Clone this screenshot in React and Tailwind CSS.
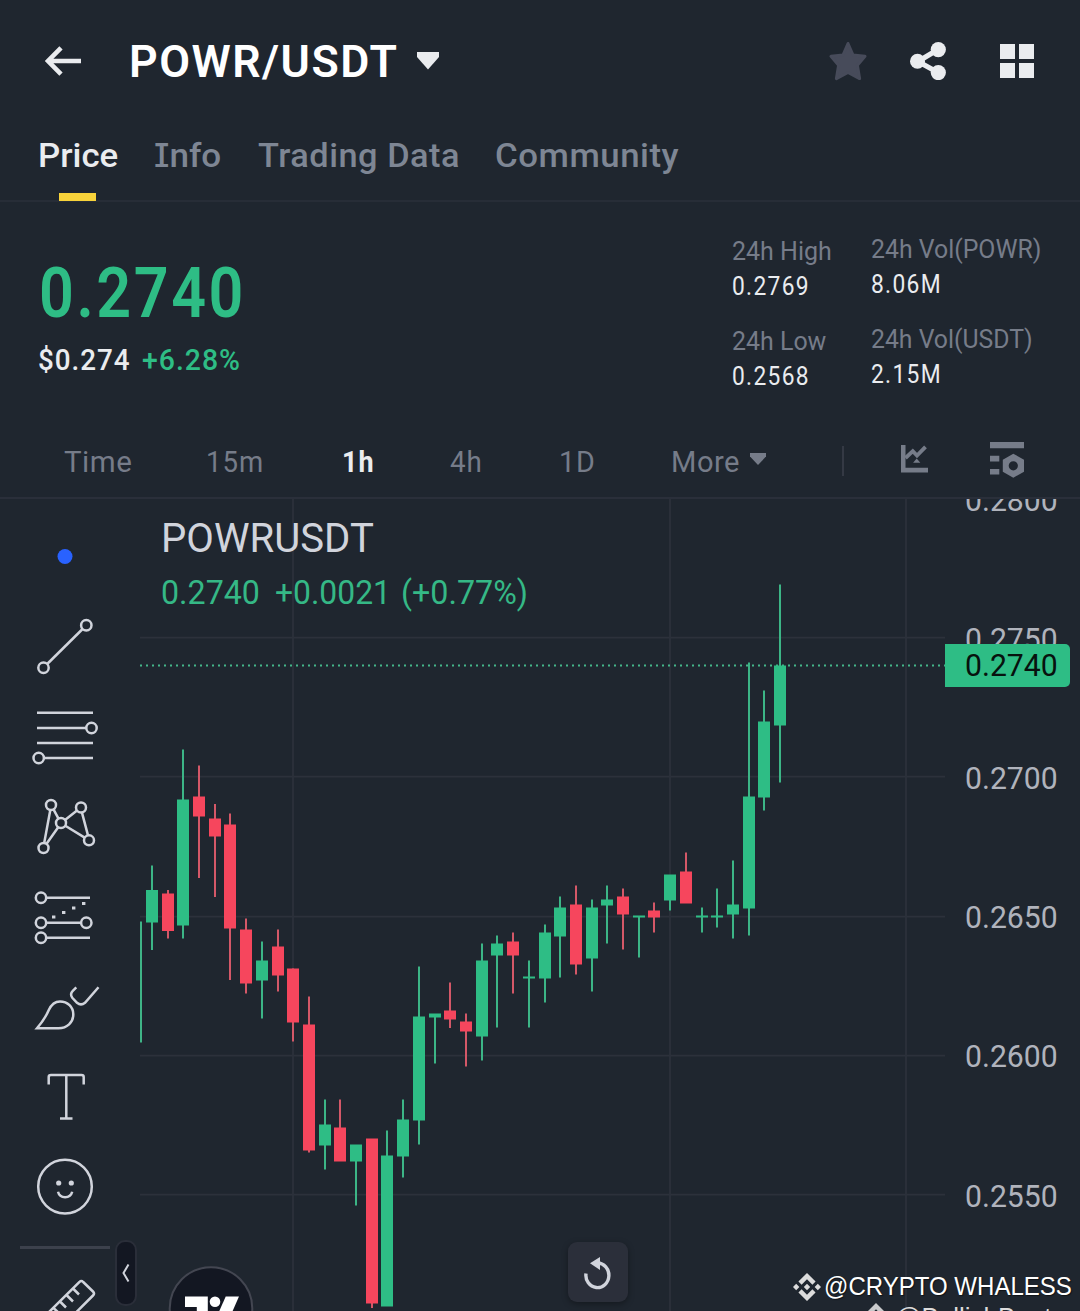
import React, { useLayoutEffect, useRef, useState } from "react";

/* Text stretched horizontally so that it fills exactly `w` pixels. */
function Fit({ w, className = "", children }) {
  const ref = useRef(null);
  const [scale, setScale] = useState(1);
  useLayoutEffect(() => {
    const natural = ref.current.offsetWidth;
    if (natural) setScale(w / natural);
  }, [w]);
  return (
    <span className={"block shrink-0 whitespace-nowrap " + className} style={{ width: w }}>
      <span ref={ref} className="inline-block origin-left" style={{ transform: `scaleX(${scale})` }}>
        {children}
      </span>
    </span>
  );
}

const UP = "#2ebd85";
const DOWN = "#f6465d";

/* x, high, low, body top, body bottom, rising */
const candles = [
  [152, 865.5, 950, 890, 922.5, 1],
  [168, 890, 938.5, 893.5, 931, 0],
  [183, 749.5, 938.5, 799.5, 925.5, 1],
  [199, 765.5, 878, 796.5, 816.5, 0],
  [215, 804, 897, 818.5, 836.5, 0],
  [230, 813.5, 980, 824.5, 928.5, 0],
  [246, 918.5, 993.5, 929.5, 983.5, 0],
  [262, 941.5, 1018.5, 960.5, 980.5, 1],
  [278, 929.5, 991.5, 946.5, 975.5, 0],
  [293, 968.5, 1041.5, 968.5, 1022.5, 0],
  [309, 996.5, 1152.5, 1024.5, 1150.5, 0],
  [325, 1099.5, 1169.5, 1124.5, 1145.5, 1],
  [340, 1099.5, 1161, 1127.5, 1161.5, 0],
  [356, 1145, 1205.5, 1144.5, 1161.5, 1],
  [372, 1139, 1308, 1138.5, 1303.5, 0],
  [387, 1130.5, 1306, 1155.5, 1306.5, 1],
  [403, 1099.5, 1177.5, 1119.5, 1156.5, 1],
  [419, 966.5, 1144.5, 1016.5, 1120.5, 1],
  [435, 1014, 1063.5, 1013.5, 1017.5, 1],
  [450, 982.5, 1028, 1010.5, 1019.5, 0],
  [466, 1013.5, 1066.5, 1021.5, 1031.5, 0],
  [482, 943.5, 1060.5, 960.5, 1036.5, 1],
  [497, 935.5, 1027.5, 943.5, 955.5, 1],
  [513, 932.5, 993.5, 941.5, 955.5, 0],
  [529, 960.5, 1027.5, 976.5, 978.5, 1],
  [545, 924.5, 1002.5, 932.5, 978.5, 1],
  [560, 896.5, 977.5, 907.5, 936.5, 1],
  [576, 885.5, 974.5, 904.5, 964.5, 0],
  [592, 899.5, 991.5, 907.5, 958.5, 1],
  [607, 885.5, 943.5, 899.5, 905.5, 1],
  [623, 888.5, 949.5, 896.5, 914.5, 0],
  [639, 916, 957.5, 915.5, 917.5, 1],
  [654, 902.5, 932.5, 910.5, 917.5, 0],
  [670, 875, 910.5, 874.5, 900.5, 1],
  [686, 852.5, 903, 871.5, 903.5, 0],
  [702, 907.5, 932.5, 915.5, 917.5, 1],
  [717, 888.5, 927.5, 915.5, 917.5, 1],
  [733, 860.5, 938.5, 904.5, 914.5, 1],
  [749, 662.5, 935.5, 796.5, 908.5, 1],
  [764, 690.5, 810.5, 721.5, 797.5, 1],
  [780, 584.5, 782.5, 665.5, 725.5, 1],
];

function Candles() {
  return (
    <svg viewBox="140 499 805 812" className="block h-[812px] w-[805px]">
      <g fill="#2c313b">
        {[637, 776, 916, 1055, 1194].map((y) => (
          <rect key={y} x="140" y={y - 0.3} width="805" height="1.8" />
        ))}
        {[293, 670, 906].map((x) => (
          <rect key={x} x={x - 0.9} y="499" width="1.8" height="812" />
        ))}
      </g>
      <line x1="140" x2="945" y1="665.5" y2="665.5" stroke="#45b58a" strokeWidth="2" strokeDasharray="2 4" />
      <rect x="140" y="921.5" width="2" height="121" fill="#3fb487" />
      {candles.map(([x, high, low, top, bottom, rising]) => (
        <g key={x}>
          <rect x={x - 1} y={high} width="2" height={low - high} fill={rising ? "#3cb586" : "#d45868"} />
          <rect x={x - 6} y={top} width="12" height={bottom - top} fill={rising ? UP : DOWN} />
        </g>
      ))}
    </svg>
  );
}

function Tool({ children }) {
  return (
    <svg
      viewBox="0 0 140 90"
      className="block h-[90px] w-[140px] shrink-0"
      fill="none"
      stroke="#d1d4dc"
      strokeWidth="2.5"
    >
      {children}
    </svg>
  );
}

function Toolbar() {
  return (
    <div className="flex w-[140px] flex-col pt-3">
      <Tool>
        <circle cx="65" cy="45.5" r="7.5" fill="#2962ff" stroke="none" />
      </Tool>
      <Tool>
        <circle cx="43.5" cy="66.7" r="5.2" />
        <circle cx="86.3" cy="24.3" r="5.2" />
        <path d="M47.2 63 82.6 28" />
      </Tool>
      <Tool>
        <path d="M37 21.7H93M37 37H86M37 52H93M44 67H93" />
        <circle cx="91.5" cy="37" r="5.2" />
        <circle cx="38.7" cy="67" r="5.2" />
      </Tool>
      <Tool>
        <circle cx="51" cy="24" r="5" />
        <circle cx="81" cy="26.5" r="5" />
        <circle cx="61" cy="42" r="5" />
        <circle cx="89" cy="59.3" r="5" />
        <circle cx="43.5" cy="67" r="5" />
        <path d="M50.3 29 44.2 62M53.5 28.4 58.5 37.6M58.2 46.2 46.4 63M65 39 77 29.6M81.9 31.4 88 54.4M65.3 44.7 84.7 56.6" />
      </Tool>
      <Tool>
        <circle cx="41" cy="26.7" r="5.2" />
        <circle cx="41" cy="51.7" r="5.2" />
        <circle cx="86.3" cy="51.7" r="5.2" />
        <circle cx="41" cy="66.7" r="5.2" />
        <path d="M46 26.7H90M46 51.7H81M46 66.7H90" />
        <g fill="#d1d4dc" stroke="none">
          <rect x="52" y="44.5" width="3.4" height="3" />
          <rect x="62" y="40" width="3.4" height="3" />
          <rect x="72" y="35.5" width="3.4" height="3" />
          <rect x="82" y="31" width="3.4" height="3" />
        </g>
      </Tool>
      <Tool>
        <path d="M37 67.3C44 59 46.5 54.5 48.8 49 51.5 43 55.5 40.4 60 40.4 67.7 40.4 73.3 46 73.3 53.3 73.3 61.5 67 67.3 58.5 67.3Z" />
        <path d="M76.3 26.3 72.8 29.8Q69.6 33 72.3 36.8L77 41.8Q81 45 85 41.8L98.5 26.3" />
      </Tool>
      <Tool>
        <path d="M48.7 33.5V26Q48.7 24 51 24H81.5Q83.700 24 83.700 26V33.500M66.300 24V67M60 67.500H72.500" />
      </Tool>
      <Tool>
        <circle cx="65" cy="45.600" r="26.800" />
        <circle cx="58.700" cy="42" r="2.600" fill="#d1d4dc" stroke="none" />
        <circle cx="71.300" cy="42" r="2.600" fill="#d1d4dc" stroke="none" />
        <path d="M58 50.800A7.300 7 0 0 0 72.200 50.800" />
      </Tool>
      <div className="mt-[15px] ml-5 h-[3px] w-[90px] shrink-0 bg-[#3c414c]" />
      <svg viewBox="0 1249 140 62" className="block h-[62px] w-[140px] shrink-0" fill="none" stroke="#d1d4dc" strokeWidth="2.500">
        <path d="M45 1316 79.500 1282Q81.300 1280 83.200 1282L93 1291.500Q95 1293.500 93 1295.500L74 1314.500M73 1288.500 79 1294.500M66.500 1295 73 1301.500M60 1301.500 66 1307.500M53.500 1308 60 1314" />
      </svg>
    </div>
  );
}

function Binance({ className, color }) {
  return (
    <svg viewBox="0 0 24 24" className={className} fill={color}>
      <path d="M16.624 13.920l2.718 2.716L12 24l-7.353-7.353 2.717-2.717L12 18.566zM21.277 9.288 24 12l-2.719 2.720L18.562 12zM12 9.288 14.720 12 12 14.720 9.280 12zM2.717 9.288 5.436 12l-2.719 2.720L0 12zM12 0l7.353 7.364-2.717 2.717L12 5.434 7.364 10.070 4.647 7.353z" />
    </svg>
  );
}

function Stat({ label, value, lw, vw }) {
  return (
    <div className="h-[90px] text-[26px] leading-[35px]">
      <Fit w={lw} className="text-[#767c89]">{label}</Fit>
      <Fit w={vw} className="tracking-[1.5px] text-[#eaecef]">{value}</Fit>
    </div>
  );
}

export default function App() {
  return (
    <div className="flex h-[1311px] w-[1080px] flex-col overflow-hidden bg-[#1f262f] font-['Roboto','Liberation_Sans',sans-serif]">
      <header className="flex h-[122px] shrink-0 items-center pl-[44px]">
        <svg viewBox="0 0 38 30" className="h-[30px] w-[38px]" fill="none" stroke="#eaecef" strokeWidth="4.6">
          <path d="M37 15H4M17 1.800 4 15 17 28.200" />
        </svg>
        <Fit w={269} className="mt-[2px] ml-[47px] text-[44.500px] leading-none font-semibold tracking-[1.500px] text-white">POWR/USDT</Fit>
        <svg viewBox="0 0 22 18" className="ml-[19px] h-[18px] w-[22px]" fill="#eaecef">
          <path d="M0 0H22V5L11 17.500 0 5Z" />
        </svg>
        <svg viewBox="0 0 38 40" className="ml-[390px] h-[40px] w-[38px]" fill="#474b5a" stroke="#474b5a" strokeWidth="3" strokeLinejoin="round">
          <path d="M19 2.500 24 14 36 15.300 28.400 24.300 30.600 37.600 19 31.500 7.400 37.600 9.600 24.300 2 15.300 14 14Z" />
        </svg>
        <svg viewBox="0 0 36 38" className="ml-[43px] h-[38px] w-[36px]" fill="#eaecef">
          <path d="M8 19.500 28 7.500M8 19.500 28 30.500" stroke="#eaecef" strokeWidth="5" />
          <circle cx="7.500" cy="19.200" r="7.500" />
          <circle cx="28.300" cy="7.600" r="7.600" />
          <circle cx="28.300" cy="30.600" r="7.600" />
        </svg>
        <div className="ml-[54px] grid grid-cols-2 gap-1">
          <i className="size-[15px] bg-[#eaecef]" />
          <i className="size-[15px] bg-[#eaecef]" />
          <i className="size-[15px] bg-[#eaecef]" />
          <i className="size-[15px] bg-[#eaecef]" />
        </div>
      </header>

      <nav className="relative flex h-[80px] shrink-0 border-b-2 border-[#272d37] pl-[38px] text-[33.500px] leading-[68px] font-medium text-[#7e8694]">
        <Fit w={80} className="text-[#eaecef]">Price</Fit>
        <Fit w={67} className="ml-[36px]">
          <span className="font-['Inter'] text-[32.500px] [font-feature-settings:'cv08']">I</span>nfo
        </Fit>
        <Fit w={202} className="ml-[37px] tracking-[0.500px]">Trading Data</Fit>
        <Fit w={184} className="ml-[35px] tracking-[0.500px]">Community</Fit>
        <div className="absolute -bottom-px left-[59px] h-2 w-[37px] bg-[#f8d33a]" />
      </nav>

      <section className="flex h-[223px] shrink-0 pl-[38px]">
        <div className="w-[694px] pt-[46px]">
          <Fit w={207} className="ml-px text-[71px] leading-[90px] font-semibold tracking-[3px] text-[#2ebd85]">0.2740</Fit>
          <div className="-mt-px flex gap-[12px] text-[29px] leading-[46px] font-medium">
            <Fit w={92} className="tracking-[1px] text-[#eaecef]">$0.274</Fit>
            <Fit w={99} className="tracking-[1px] text-[#2ebd85]">+6.28%</Fit>
          </div>
        </div>
        <div className="w-[139px] pt-[32px]">
          <Stat label="24h High" value="0.2769" lw={100} vw={78} />
          <Stat label="24h Low" value="0.2568" lw={94} vw={78} />
        </div>
        <div className="pt-[30px]">
          <Stat label="24h Vol(POWR)" value="8.06M" lw={170} vw={71} />
          <Stat label="24h Vol(USDT)" value="2.15M" lw={162} vw={71} />
        </div>
      </section>

      <section className="flex h-[74px] shrink-0 items-center border-b-2 border-[#2a2f3a] pl-[64px] text-[29.500px] leading-none text-[#767c89]">
        <Fit w={68} className="mt-[3px] tracking-[0.500px]">Time</Fit>
        <Fit w={58} className="mt-[3px] ml-[74px] tracking-[1px]">15m</Fit>
        <Fit w={32} className="mt-[3px] ml-[78px] font-bold tracking-[1px] text-[#eaecef]">1h</Fit>
        <Fit w={33} className="mt-[3px] ml-[76px] tracking-[1px]">4h</Fit>
        <Fit w={37} className="mt-[3px] ml-[76px] tracking-[1px]">1D</Fit>
        <Fit w={69} className="mt-[3px] ml-[75px] tracking-[0.500px]">More</Fit>
        <svg viewBox="0 0 16 12" className="mb-1 ml-[10px] h-[12px] w-[16px]" fill="#767c89">
          <path d="M0 0H16V3.500L8 12 0 3.500Z" />
        </svg>
        <div className="mb-px ml-[76px] h-[30px] w-[2px] bg-[#343944]" />
        <svg viewBox="0 0 27 28" className="mb-1 ml-[57px] h-[28px] w-[27px]" fill="#767c89">
          <path d="M0 0H4.500V22.800H27V27.500H0Z" />
          <path d="M4.500 13 11.800 6.200 16 10.500 24.500 1.800" fill="none" stroke="#767c89" strokeWidth="3.800" />
          <path d="M15.700 13.500 19.300 17.700H12.100Z" />
        </svg>
        <svg viewBox="0 0 34 36" className="mb-[2px] ml-[62px] h-[36px] w-[34px]" fill="#767c89">
          <path d="M0 0H34V6.300H0ZM0 13.800H9.300V19.500H0ZM0 27H9.300V32.500H0Z" />
          <path fillRule="evenodd" d="M23.300 11.700 34 17.700V29.700L23.300 35.700 12.800 29.700V17.700ZM23.300 19.200A4.600 4.600 0 1 0 23.300 28.400 4.600 4.600 0 1 0 23.300 19.200Z" />
        </svg>
      </section>

      <main className="relative flex h-[812px] shrink-0 overflow-hidden">
        <Toolbar />
        <Candles />
        <div className="flex w-[135px] flex-col text-[30.500px] text-[#b0b3bc]">
          <div className="-mt-[68px] flex flex-col">
            {["0.2800", "0.2750", "0.2700", "0.2650", "0.2600", "0.2550"].map((p) => (
              <div key={p} className="flex h-[139.200px] items-center pl-[19px]">
                <Fit w={93} className="ml-px">{p}</Fit>
              </div>
            ))}
          </div>
        </div>

        {/* last price tag */}
        <div className="absolute top-[144.500px] left-[945px] flex h-[43.500px] w-[125px] items-center rounded-r-[5px] bg-[#2ebd85] pt-[2px] pl-[20px] text-[30.500px] text-[#07120e]">
          <Fit w={93}>0.2740</Fit>
        </div>

        {/* legend */}
        <div className="absolute top-[12px] left-[161px]">
          <Fit w={213} className="text-[40.500px] leading-[54px] text-[#d1d4dc]">POWRUSDT</Fit>
          <div className="mt-px flex text-[33.500px] leading-[54px] text-[#35b886]">
            <Fit w={99}>0.2740</Fit>
            <Fit w={116} className="ml-[15px]">+0.0021</Fit>
            <Fit w={127} className="ml-[10px]">(+0.77%)</Fit>
          </div>
        </div>

        {/* toolbar collapse handle */}
        <div className="absolute top-[741px] left-[115px] flex h-[66px] w-[22px] items-center justify-center rounded-[10px] border-2 border-[#2a2e39] bg-[#131722]">
          <svg viewBox="0 0 8 18" className="h-[18px] w-2" fill="none" stroke="#d1d4dc" strokeWidth="2">
            <path d="M6.500 0.500 1.500 9 6.500 17.500" />
          </svg>
        </div>

        {/* TradingView badge */}
        <svg viewBox="0 0 86 46" className="absolute top-[766px] left-[168px] h-[46px] w-[86px]">
          <circle cx="43" cy="43.500" r="41.300" fill="#131722" stroke="#434651" strokeWidth="2" />
          <g fill="#fff">
            <path d="M17 31.500H39.800V52H28.800V42H17Z" />
            <circle cx="47" cy="36.800" r="5.300" />
            <path d="M57.700 31.500H71L62 52H48.700Z" />
          </g>
        </svg>

        {/* reset chart view */}
        <div className="absolute top-[743px] left-[568px] flex size-[60px] items-center justify-center rounded-[9px] bg-[#2b2f3a] shadow-[0_2px_6px_rgba(0,0,0,0.350)]">
          <svg viewBox="0 0 60 60" className="size-[60px]">
            <path d="M18 31.500A11.500 12.300 0 1 0 29.500 21" fill="none" stroke="#d1d4dc" strokeWidth="3.400" />
            <path d="M22 21.300 32 15V28Z" fill="#d1d4dc" />
          </svg>
        </div>

        {/* watermarks */}
        <div className="absolute top-[774px] left-[793px] flex items-center gap-[3px] font-['Liberation_Sans',Arial,sans-serif] text-[25px] leading-[30px] text-white">
          <Binance className="size-[28px]" color="#dcdcdc" />
          <Fit w={248} className="-mt-[2px] [text-shadow:1px_1px_1px_rgba(0,0,0,0.500)]">@CRYPTO WHALESS</Fit>
        </div>
        <div className="absolute top-[803px] left-[862px] flex items-center gap-[5px] font-['Liberation_Sans',Arial,sans-serif] text-[26px] leading-[30px] text-[#dcdcdc]">
          <Binance className="size-[28px]" color="#c9cacc" />
          <span>@BullishBanter</span>
        </div>
      </main>
    </div>
  );
}
